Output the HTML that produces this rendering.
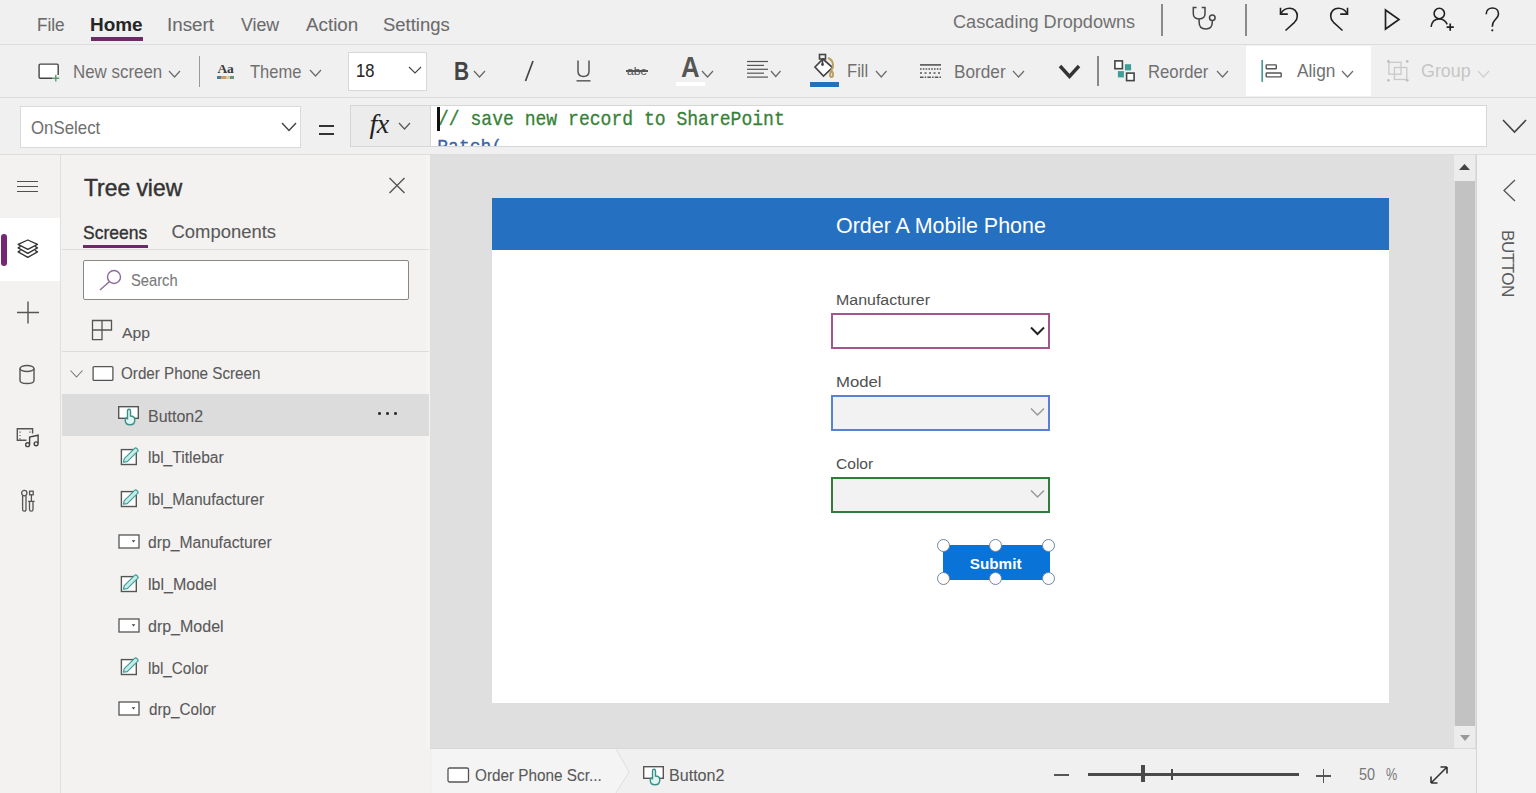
<!DOCTYPE html>
<html><head><meta charset="utf-8"><style>
html,body{margin:0;padding:0;width:1536px;height:793px;overflow:hidden;background:#f0f0f0;}
body>div,body>svg{position:absolute;}
div div{position:absolute;}
</style></head><body>
<div style="left:0px;top:0px;width:1536px;height:793px;background:#f0f0f0;"></div><div style="left:0px;top:44px;width:1536px;height:1px;background:#dcdcdc;"></div><div style="left:0px;top:97px;width:1536px;height:1px;background:#dcdcdc;"></div><div style="left:0px;top:154px;width:1536px;height:1px;background:#dcdcdc;"></div><div style="left:0px;top:155px;width:60px;height:638px;background:#f3f2f1;"></div><div style="left:60px;top:155px;width:1px;height:638px;background:#e1dfdd;"></div><div style="left:0px;top:218px;width:60px;height:63px;background:#ffffff;"></div><div style="left:1px;top:234px;width:6px;height:32px;background:#742774;border-radius:3px;"></div><div style="left:61px;top:155px;width:369px;height:638px;background:#f3f2f1;"></div><div style="left:426px;top:155px;width:4px;height:593px;background:#f5f4f3;"></div><div style="left:430px;top:155px;width:1046px;height:593px;background:#dfdfdf;"></div><div style="left:492px;top:198px;width:897px;height:505px;background:#ffffff;"></div><div style="left:492px;top:198px;width:897px;height:52px;background:#2670c2;"></div><div style="left:1454px;top:155px;width:22px;height:593px;background:#dedede;"></div><div style="left:1454px;top:155px;width:21px;height:26px;background:#ececec;"></div><div style="left:1455px;top:181px;width:20px;height:545px;background:#c2c2c2;"></div><div style="left:1454px;top:726px;width:21px;height:22px;background:#ececec;"></div><div style="left:1476px;top:155px;width:1px;height:638px;background:#d4d4d4;"></div><div style="left:1477px;top:155px;width:59px;height:638px;background:#f3f3f3;"></div><div style="left:430px;top:748px;width:1046px;height:45px;background:#f0f0f0;"></div><div style="left:430px;top:748px;width:1046px;height:1px;background:#d8d8d8;"></div><div style="left:432px;top:749px;width:186px;height:44px;background:#f4f4f4;"></div><svg style="left:612px;top:749px;" width="20" height="44" viewBox="0 0 20 44" ><polyline points="4,0 17,23 4,44" fill="#f4f4f4" stroke="#dedede" stroke-width="1"/></svg><div style="left:37.20px;top:15.13px;font-family:'Liberation Sans',sans-serif;font-weight:normal;font-size:19.19px;line-height:1;color:#6b6b6b;white-space:pre;-webkit-text-stroke:0.1px #6b6b6b;transform:scaleX(0.8952);transform-origin:0 0;">File</div><div style="left:89.90px;top:15.13px;font-family:'Liberation Sans',sans-serif;font-weight:bold;font-size:19.19px;line-height:1;color:#252525;white-space:pre;transform:scaleX(0.9875);transform-origin:0 0;">Home</div><div style="left:90.5px;top:37px;width:52.5px;height:3.8px;background:#6a2c68;"></div><div style="left:167.00px;top:15.13px;font-family:'Liberation Sans',sans-serif;font-weight:normal;font-size:19.19px;line-height:1;color:#6b6b6b;white-space:pre;-webkit-text-stroke:0.1px #6b6b6b;transform:scaleX(0.9784);transform-origin:0 0;">Insert</div><div style="left:240.80px;top:15.13px;font-family:'Liberation Sans',sans-serif;font-weight:normal;font-size:19.19px;line-height:1;color:#6b6b6b;white-space:pre;-webkit-text-stroke:0.1px #6b6b6b;transform:scaleX(0.9254);transform-origin:0 0;">View</div><div style="left:305.80px;top:15.13px;font-family:'Liberation Sans',sans-serif;font-weight:normal;font-size:19.19px;line-height:1;color:#6b6b6b;white-space:pre;-webkit-text-stroke:0.1px #6b6b6b;transform:scaleX(0.9796);transform-origin:0 0;">Action</div><div style="left:383.00px;top:14.73px;font-family:'Liberation Sans',sans-serif;font-weight:normal;font-size:19.19px;line-height:1;color:#6b6b6b;white-space:pre;-webkit-text-stroke:0.1px #6b6b6b;transform:scaleX(0.9612);transform-origin:0 0;">Settings</div><div style="left:952.70px;top:12.56px;font-family:'Liberation Sans',sans-serif;font-weight:normal;font-size:18.90px;line-height:1;color:#707070;white-space:pre;transform:scaleX(0.9585);transform-origin:0 0;-webkit-text-stroke:0px;">Cascading Dropdowns</div><div style="left:1161px;top:4px;width:1.5px;height:32px;background:#8a8a8a;"></div><div style="left:1245px;top:4px;width:1.5px;height:32px;background:#8a8a8a;"></div><div style="left:72.70px;top:62.65px;font-family:'Liberation Sans',sans-serif;font-weight:normal;font-size:18.31px;line-height:1;color:#707070;white-space:pre;transform:scaleX(0.9241);transform-origin:0 0;-webkit-text-stroke:0px;">New screen</div><svg style="left:167.0px;top:68.5px;" width="15" height="10" viewBox="0 0 15 10" ><polyline points="2,2 7.5,8 13,2" fill="none" stroke="#6b6b6b" stroke-width="1.2"/></svg><div style="left:198.5px;top:56px;width:1.5px;height:31px;background:#999;"></div><div style="left:250.00px;top:62.65px;font-family:'Liberation Sans',sans-serif;font-weight:normal;font-size:18.31px;line-height:1;color:#707070;white-space:pre;transform:scaleX(0.9037);transform-origin:0 0;-webkit-text-stroke:0px;">Theme</div><svg style="left:307.8px;top:68.4px;" width="15" height="10" viewBox="0 0 15 10" ><polyline points="2,2 7.5,8 13,2" fill="none" stroke="#6b6b6b" stroke-width="1.2"/></svg><div style="left:348px;top:51.5px;width:79px;height:39px;background:#ffffff;box-sizing:border-box;border:1.5px solid #d8d8d8;"></div><div style="left:356.40px;top:62.50px;font-family:'Liberation Sans',sans-serif;font-weight:normal;font-size:17.59px;line-height:1;color:#262626;white-space:pre;-webkit-text-stroke:0.1px #262626;transform:scaleX(0.9393);transform-origin:0 0;">18</div><svg style="left:406.8px;top:65.2px;" width="16" height="10" viewBox="0 0 16 10" ><polyline points="2,2 8.0,8 14,2" fill="none" stroke="#444" stroke-width="1.1"/></svg><div style="left:846.90px;top:62.29px;font-family:'Liberation Sans',sans-serif;font-weight:normal;font-size:18.31px;line-height:1;color:#707070;white-space:pre;transform:scaleX(0.9080);transform-origin:0 0;-webkit-text-stroke:0px;">Fill</div><svg style="left:873.55px;top:68.5px;" width="14.5" height="10" viewBox="0 0 14.5 10" ><polyline points="2,2 7.25,8 12.5,2" fill="none" stroke="#6b6b6b" stroke-width="1.2"/></svg><div style="left:954.00px;top:62.65px;font-family:'Liberation Sans',sans-serif;font-weight:normal;font-size:18.31px;line-height:1;color:#707070;white-space:pre;transform:scaleX(0.9406);transform-origin:0 0;-webkit-text-stroke:0px;">Border</div><svg style="left:1011.0px;top:68.5px;" width="15" height="10" viewBox="0 0 15 10" ><polyline points="2,2 7.5,8 13,2" fill="none" stroke="#6b6b6b" stroke-width="1.2"/></svg><div style="left:1097px;top:55.5px;width:1.5px;height:30.5px;background:#888;"></div><div style="left:1148.30px;top:62.65px;font-family:'Liberation Sans',sans-serif;font-weight:normal;font-size:18.31px;line-height:1;color:#707070;white-space:pre;transform:scaleX(0.9130);transform-origin:0 0;-webkit-text-stroke:0px;">Reorder</div><svg style="left:1214.8px;top:68.5px;" width="15" height="10" viewBox="0 0 15 10" ><polyline points="2,2 7.5,8 13,2" fill="none" stroke="#6b6b6b" stroke-width="1.2"/></svg><div style="left:1246.4px;top:46px;width:124.4px;height:50px;background:#ffffff;"></div><div style="left:1296.80px;top:61.91px;font-family:'Liberation Sans',sans-serif;font-weight:normal;font-size:18.31px;line-height:1;color:#707070;white-space:pre;transform:scaleX(0.9431);transform-origin:0 0;-webkit-text-stroke:0px;">Align</div><svg style="left:1340.0px;top:68.5px;" width="15" height="10" viewBox="0 0 15 10" ><polyline points="2,2 7.5,8 13,2" fill="none" stroke="#6b6b6b" stroke-width="1.2"/></svg><div style="left:1420.80px;top:61.91px;font-family:'Liberation Sans',sans-serif;font-weight:normal;font-size:18.31px;line-height:1;color:#c6c6c6;white-space:pre;transform:scaleX(0.9753);transform-origin:0 0;-webkit-text-stroke:0px;">Group</div><svg style="left:1475.5px;top:68.5px;" width="15" height="10" viewBox="0 0 15 10" ><polyline points="2,2 7.5,8 13,2" fill="none" stroke="#cfcfcf" stroke-width="1.2"/></svg><div style="left:20px;top:106px;width:281px;height:42px;background:#ffffff;box-sizing:border-box;border:1px solid #dadada;"></div><div style="left:31.30px;top:119.51px;font-family:'Liberation Sans',sans-serif;font-weight:normal;font-size:17.88px;line-height:1;color:#6e6e6e;white-space:pre;transform:scaleX(0.9427);transform-origin:0 0;-webkit-text-stroke:0px;">OnSelect</div><svg style="left:280.0px;top:121.25px;" width="18" height="11.5" viewBox="0 0 18 11.5" ><polyline points="2,2 9.0,9.5 16,2" fill="none" stroke="#444" stroke-width="1.4"/></svg><div style="left:319px;top:125px;width:15px;height:2.2px;background:#333;"></div><div style="left:319px;top:132.5px;width:15px;height:2.2px;background:#333;"></div><div style="left:350.3px;top:105px;width:79.4px;height:41.5px;background:#ececec;box-sizing:border-box;border:1px solid #d6d6d6;border-right:none;"></div><div style="left:429.7px;top:105px;width:1057.5px;height:41.5px;background:#ffffff;box-sizing:border-box;border:1px solid #d6d6d6;overflow:hidden;"></div><div style="left:438.00px;top:110.08px;font-family:'Liberation Mono',sans-serif;font-weight:normal;font-size:20.03px;line-height:1;color:#368236;white-space:pre;transform:scaleX(0.9022);transform-origin:0 0;-webkit-text-stroke:0.3px #368236;">// save new record to SharePoint</div><div style="left:431px;top:131px;width:1054px;height:15px;overflow:hidden;"><div style="left:6.3px;top:6.7px;font-family:'Liberation Mono',monospace;font-size:18px;line-height:1;color:#3b63a8;-webkit-text-stroke:0.3px #3b63a8;white-space:pre;transform:scaleX(1.0);">Patch(</div></div><div style="left:437px;top:106.7px;width:3px;height:24.6px;background:#111;"></div><svg style="left:1500.7px;top:118.2px;" width="27" height="16" viewBox="0 0 27 16" ><polyline points="2,2 13.5,14 25,2" fill="none" stroke="#444" stroke-width="1.6"/></svg><div style="left:17px;top:180.6px;width:21.3px;height:1.5px;background:#505050;"></div><div style="left:17px;top:185.6px;width:21.3px;height:1.5px;background:#505050;"></div><div style="left:17px;top:190.6px;width:21.3px;height:1.5px;background:#505050;"></div><div style="left:83.80px;top:176.87px;font-family:'Liberation Sans',sans-serif;font-weight:normal;font-size:23.26px;line-height:1;color:#333333;white-space:pre;transform:scaleX(0.9820);transform-origin:0 0;-webkit-text-stroke:0.45px #333;">Tree view</div><svg style="left:388px;top:177.3px;" width="18" height="17" viewBox="0 0 18 17" ><path d="M1.5,1 L16.5,16 M16.5,1 L1.5,16" stroke="#555" stroke-width="1.4" fill="none"/></svg><div style="left:82.80px;top:223.83px;font-family:'Liberation Sans',sans-serif;font-weight:normal;font-size:18.46px;line-height:1;color:#333333;white-space:pre;transform:scaleX(0.9485);transform-origin:0 0;-webkit-text-stroke:0.35px #333;">Screens</div><div style="left:83px;top:244.7px;width:65px;height:3px;background:#6a2c68;"></div><div style="left:171.50px;top:223.14px;font-family:'Liberation Sans',sans-serif;font-weight:normal;font-size:18.46px;line-height:1;color:#595959;white-space:pre;-webkit-text-stroke:0.1px #595959;">Components</div><div style="left:62px;top:248.7px;width:367px;height:1px;background:#dcdcdc;"></div><div style="left:83px;top:260px;width:326px;height:40px;background:#ffffff;box-sizing:border-box;border:1px solid #8a8886;border-radius:2px;"></div><svg style="left:98px;top:268px;" width="26" height="23" viewBox="0 0 26 23" ><circle cx="16" cy="9" r="6.5" fill="none" stroke="#8d6a9a" stroke-width="1.4"/><line x1="11.3" y1="13.8" x2="2" y2="22" stroke="#8d6a9a" stroke-width="1.4"/></svg><div style="left:131.20px;top:272.78px;font-family:'Liberation Sans',sans-serif;font-weight:normal;font-size:15.99px;line-height:1;color:#7a7a7a;white-space:pre;-webkit-text-stroke:0.1px #7a7a7a;transform:scaleX(0.9208);transform-origin:0 0;">Search</div><svg style="left:91px;top:319px;" width="22" height="22" viewBox="0 0 22 22" ><path d="M1.5,1.5 H20.5 V11 H11 V20.6 H1.5 Z M1.5,11 H11 V1.5" fill="none" stroke="#555" stroke-width="1.3"/></svg><div style="left:121.90px;top:324.86px;font-family:'Liberation Sans',sans-serif;font-weight:normal;font-size:15.41px;line-height:1;color:#595959;white-space:pre;-webkit-text-stroke:0.1px #595959;transform:scaleX(1.0216);transform-origin:0 0;">App</div><div style="left:62px;top:351px;width:367px;height:1px;background:#dcdcdc;"></div><svg style="left:69px;top:368.5px;" width="15" height="10" viewBox="0 0 15 10" ><polyline points="1.5,1.5 7.5,8 13.5,1.5" fill="none" stroke="#777" stroke-width="1.1"/></svg><svg style="left:92px;top:365px;" width="22" height="17" viewBox="0 0 22 17" ><rect x="1.1" y="1.6" width="19.8" height="13.8" rx="1" fill="#fff" stroke="#555" stroke-width="1.3"/></svg><div style="left:121.20px;top:366.40px;font-family:'Liberation Sans',sans-serif;font-weight:normal;font-size:15.84px;line-height:1;color:#595959;white-space:pre;-webkit-text-stroke:0.1px #595959;transform:scaleX(0.9609);transform-origin:0 0;">Order Phone Screen</div><div style="left:62px;top:394px;width:367px;height:42px;background:#dcdcdc;"></div><svg style="left:117px;top:406px;" width="23" height="20" viewBox="0 0 23 20" ><rect x="1.7" y="0.7" width="19.6" height="11.6" fill="#fff" stroke="#555" stroke-width="1.4"/><path d="M10.5,13.5 V5 Q10.5,3.3 12,3.3 Q13.5,3.3 13.5,5 V10 Q17.8,10 17.8,14 Q17.8,18.8 13,18.8 Q8.2,18.8 8.2,14 Q8.2,12.2 10.5,11.5" fill="#dff5f2" stroke="#3a8f88" stroke-width="1.4"/></svg><div style="left:148.00px;top:408.50px;font-family:'Liberation Sans',sans-serif;font-weight:normal;font-size:15.84px;line-height:1;color:#595959;white-space:pre;-webkit-text-stroke:0.1px #595959;transform:scaleX(1.0082);transform-origin:0 0;">Button2</div><div style="left:378.3px;top:412px;width:2.5px;height:2.5px;background:#333;border-radius:50%;"></div><div style="left:386.3px;top:412px;width:2.5px;height:2.5px;background:#333;border-radius:50%;"></div><div style="left:394.3px;top:412px;width:2.5px;height:2.5px;background:#333;border-radius:50%;"></div><svg style="left:119.5px;top:447px;" width="20" height="20" viewBox="0 0 20 20" ><rect x="1.4" y="2.6" width="14.9" height="14.9" fill="#fff" stroke="#555" stroke-width="1.4"/><path d="M3.4,15.2 L4.3,11.6 L14.6,1.4 Q15.6,0.4 16.8,1.5 L17.6,2.3 Q18.6,3.4 17.6,4.4 L7.3,14.6 Z" fill="#c6ece8" stroke="#3f9e96" stroke-width="1.2" stroke-linejoin="round"/></svg><div style="left:148.20px;top:449.89px;font-family:'Liberation Sans',sans-serif;font-weight:normal;font-size:15.84px;line-height:1;color:#595959;white-space:pre;-webkit-text-stroke:0.1px #595959;transform:scaleX(0.9859);transform-origin:0 0;">lbl_Titlebar</div><svg style="left:119.5px;top:489px;" width="20" height="20" viewBox="0 0 20 20" ><rect x="1.4" y="2.6" width="14.9" height="14.9" fill="#fff" stroke="#555" stroke-width="1.4"/><path d="M3.4,15.2 L4.3,11.6 L14.6,1.4 Q15.6,0.4 16.8,1.5 L17.6,2.3 Q18.6,3.4 17.6,4.4 L7.3,14.6 Z" fill="#c6ece8" stroke="#3f9e96" stroke-width="1.2" stroke-linejoin="round"/></svg><div style="left:148.40px;top:491.89px;font-family:'Liberation Sans',sans-serif;font-weight:normal;font-size:15.84px;line-height:1;color:#595959;white-space:pre;-webkit-text-stroke:0.1px #595959;transform:scaleX(0.9849);transform-origin:0 0;">lbl_Manufacturer</div><svg style="left:117.5px;top:533.8px;" width="22" height="15" viewBox="0 0 22 15" ><rect x="1" y="1" width="20" height="13" fill="#fff" stroke="#555" stroke-width="1.3"/><polygon points="13.6,6.3 17.4,6.3 15.5,8.6" fill="#444"/></svg><div style="left:148.20px;top:534.67px;font-family:'Liberation Sans',sans-serif;font-weight:normal;font-size:15.84px;line-height:1;color:#595959;white-space:pre;-webkit-text-stroke:0.1px #595959;transform:scaleX(0.9909);transform-origin:0 0;">drp_Manufacturer</div><svg style="left:119.5px;top:573.7px;" width="20" height="20" viewBox="0 0 20 20" ><rect x="1.4" y="2.6" width="14.9" height="14.9" fill="#fff" stroke="#555" stroke-width="1.4"/><path d="M3.4,15.2 L4.3,11.6 L14.6,1.4 Q15.6,0.4 16.8,1.5 L17.6,2.3 Q18.6,3.4 17.6,4.4 L7.3,14.6 Z" fill="#c6ece8" stroke="#3f9e96" stroke-width="1.2" stroke-linejoin="round"/></svg><div style="left:148.20px;top:576.99px;font-family:'Liberation Sans',sans-serif;font-weight:normal;font-size:15.84px;line-height:1;color:#595959;white-space:pre;-webkit-text-stroke:0.1px #595959;transform:scaleX(1.0109);transform-origin:0 0;">lbl_Model</div><svg style="left:117.5px;top:617.5px;" width="22" height="15" viewBox="0 0 22 15" ><rect x="1" y="1" width="20" height="13" fill="#fff" stroke="#555" stroke-width="1.3"/><polygon points="13.6,6.3 17.4,6.3 15.5,8.6" fill="#444"/></svg><div style="left:148.20px;top:618.67px;font-family:'Liberation Sans',sans-serif;font-weight:normal;font-size:15.84px;line-height:1;color:#595959;white-space:pre;-webkit-text-stroke:0.1px #595959;transform:scaleX(1.0106);transform-origin:0 0;">drp_Model</div><svg style="left:119.5px;top:657.3px;" width="20" height="20" viewBox="0 0 20 20" ><rect x="1.4" y="2.6" width="14.9" height="14.9" fill="#fff" stroke="#555" stroke-width="1.4"/><path d="M3.4,15.2 L4.3,11.6 L14.6,1.4 Q15.6,0.4 16.8,1.5 L17.6,2.3 Q18.6,3.4 17.6,4.4 L7.3,14.6 Z" fill="#c6ece8" stroke="#3f9e96" stroke-width="1.2" stroke-linejoin="round"/></svg><div style="left:148.20px;top:660.79px;font-family:'Liberation Sans',sans-serif;font-weight:normal;font-size:15.84px;line-height:1;color:#595959;white-space:pre;-webkit-text-stroke:0.1px #595959;transform:scaleX(0.9663);transform-origin:0 0;">lbl_Color</div><svg style="left:117.5px;top:700.9px;" width="22" height="15" viewBox="0 0 22 15" ><rect x="1" y="1" width="20" height="13" fill="#fff" stroke="#555" stroke-width="1.3"/><polygon points="13.6,6.3 17.4,6.3 15.5,8.6" fill="#444"/></svg><div style="left:149.20px;top:701.87px;font-family:'Liberation Sans',sans-serif;font-weight:normal;font-size:15.84px;line-height:1;color:#595959;white-space:pre;-webkit-text-stroke:0.1px #595959;transform:scaleX(0.9631);transform-origin:0 0;">drp_Color</div><div style="left:836.00px;top:214.63px;font-family:'Liberation Sans',sans-serif;font-weight:normal;font-size:22.09px;line-height:1;color:#ffffff;white-space:pre;transform:scaleX(0.9716);transform-origin:0 0;-webkit-text-stroke:0px;">Order A Mobile Phone</div><div style="left:836.00px;top:292.28px;font-family:'Liberation Sans',sans-serif;font-weight:normal;font-size:15.26px;line-height:1;color:#505050;white-space:pre;transform:scaleX(1.0455);transform-origin:0 0;-webkit-text-stroke:0px;">Manufacturer</div><div style="left:831px;top:313.4px;width:219px;height:36px;background:#ffffff;box-sizing:border-box;border:2.5px solid #a4558e;"></div><svg style="left:1029px;top:325px;" width="17" height="12" viewBox="0 0 17 12" ><polyline points="2,2.5 8.5,9 15,2.5" fill="none" stroke="#222" stroke-width="2"/></svg><div style="left:836.00px;top:373.98px;font-family:'Liberation Sans',sans-serif;font-weight:normal;font-size:15.26px;line-height:1;color:#505050;white-space:pre;transform:scaleX(1.0963);transform-origin:0 0;-webkit-text-stroke:0px;">Model</div><div style="left:831px;top:395.3px;width:219px;height:36px;background:#f2f2f2;box-sizing:border-box;border:2.5px solid #5a7fd6;"></div><svg style="left:1029px;top:406px;" width="17" height="12" viewBox="0 0 17 12" ><polyline points="2,2.5 8.5,9 15,2.5" fill="none" stroke="#999" stroke-width="1.5"/></svg><div style="left:836.00px;top:456.38px;font-family:'Liberation Sans',sans-serif;font-weight:normal;font-size:15.26px;line-height:1;color:#505050;white-space:pre;transform:scaleX(1.0210);transform-origin:0 0;-webkit-text-stroke:0px;">Color</div><div style="left:831px;top:477.4px;width:219px;height:36px;background:#f2f2f2;box-sizing:border-box;border:2.5px solid #2e7d3a;"></div><svg style="left:1029px;top:488px;" width="17" height="12" viewBox="0 0 17 12" ><polyline points="2,2.5 8.5,9 15,2.5" fill="none" stroke="#999" stroke-width="1.5"/></svg><div style="left:942.5px;top:545.4px;width:107px;height:34.4px;background:#0a73d7;"></div><div style="left:969.80px;top:555.63px;font-family:'Liberation Sans',sans-serif;font-weight:bold;font-size:15.26px;line-height:1;color:#ffffff;white-space:pre;">Submit</div><div style="left:936.7px;top:539.3px;width:13px;height:13px;box-sizing:border-box;border:1.7px solid #6d86a3;border-radius:50%;background:#fff;"></div><div style="left:936.7px;top:571.9px;width:13px;height:13px;box-sizing:border-box;border:1.7px solid #6d86a3;border-radius:50%;background:#fff;"></div><div style="left:989.3px;top:539.3px;width:13px;height:13px;box-sizing:border-box;border:1.7px solid #6d86a3;border-radius:50%;background:#fff;"></div><div style="left:989.3px;top:571.9px;width:13px;height:13px;box-sizing:border-box;border:1.7px solid #6d86a3;border-radius:50%;background:#fff;"></div><div style="left:1042.1px;top:539.3px;width:13px;height:13px;box-sizing:border-box;border:1.7px solid #6d86a3;border-radius:50%;background:#fff;"></div><div style="left:1042.1px;top:571.9px;width:13px;height:13px;box-sizing:border-box;border:1.7px solid #6d86a3;border-radius:50%;background:#fff;"></div><svg style="left:1459px;top:164px;" width="11" height="7" viewBox="0 0 11 7" ><polygon points="0,6 5.5,0 11,6" fill="#444"/></svg><svg style="left:1459.5px;top:734.5px;" width="10" height="6" viewBox="0 0 10 6" ><polygon points="0,0 10,0 5,6" fill="#999"/></svg><svg style="left:1502px;top:179px;" width="15" height="23" viewBox="0 0 15 23" ><polyline points="13,1 2,11.5 13,22" fill="none" stroke="#555" stroke-width="1.3"/></svg><div style="left:1516.3px;top:229.5px;transform:rotate(90deg);transform-origin:0 0;font-family:'Liberation Sans',sans-serif;font-size:17px;line-height:1;color:#5a5a5a;white-space:pre;letter-spacing:-0.45px;">BUTTON</div><svg style="left:447px;top:767px;" width="23" height="16" viewBox="0 0 23 16" ><rect x="1" y="1" width="20.5" height="14" rx="1.5" fill="#fff" stroke="#555" stroke-width="1.3"/></svg><div style="left:475.20px;top:768.06px;font-family:'Liberation Sans',sans-serif;font-weight:normal;font-size:16.86px;line-height:1;color:#595959;white-space:pre;-webkit-text-stroke:0.1px #595959;transform:scaleX(0.9069);transform-origin:0 0;">Order Phone Scr...</div><svg style="left:641.5px;top:765.5px;" width="23" height="20" viewBox="0 0 23 20" ><rect x="1.7" y="0.7" width="19.6" height="11.6" fill="#fff" stroke="#555" stroke-width="1.4"/><path d="M10.5,13.5 V5 Q10.5,3.3 12,3.3 Q13.5,3.3 13.5,5 V10 Q17.8,10 17.8,14 Q17.8,18.8 13,18.8 Q8.2,18.8 8.2,14 Q8.2,12.2 10.5,11.5" fill="#dff5f2" stroke="#3a8f88" stroke-width="1.4"/></svg><div style="left:668.80px;top:768.06px;font-family:'Liberation Sans',sans-serif;font-weight:normal;font-size:16.86px;line-height:1;color:#595959;white-space:pre;-webkit-text-stroke:0.1px #595959;transform:scaleX(0.9542);transform-origin:0 0;">Button2</div><div style="left:1053.6px;top:774px;width:15px;height:1.5px;background:#555;"></div><div style="left:1088px;top:773.4px;width:210.5px;height:2.7px;background:#4a4a4a;"></div><div style="left:1141px;top:765px;width:4px;height:17px;background:#4a4a4a;"></div><div style="left:1171.2px;top:769px;width:1.8px;height:11px;background:#4a4a4a;"></div><div style="left:1316px;top:775px;width:15px;height:1.5px;background:#555;"></div><div style="left:1322.7px;top:769px;width:1.5px;height:13.5px;background:#555;"></div><div style="left:1359.00px;top:767.02px;font-family:'Liberation Sans',sans-serif;font-weight:normal;font-size:15.70px;line-height:1;color:#777;white-space:pre;transform:scaleX(0.9207);transform-origin:0 0;-webkit-text-stroke:0px;">50</div><div style="left:1386.00px;top:766.89px;font-family:'Liberation Sans',sans-serif;font-weight:normal;font-size:15.70px;line-height:1;color:#777;white-space:pre;transform:scaleX(0.8043);transform-origin:0 0;-webkit-text-stroke:0px;">%</div><svg style="left:1429px;top:764.5px;" width="20" height="20" viewBox="0 0 20 20" ><path d="M2,18 L18,2 M2,18 V11.5 M2,18 H8.5 M18,2 H11.5 M18,2 V8.5" fill="none" stroke="#333" stroke-width="1.6"/></svg><svg style="left:37px;top:62px;" width="25" height="21" viewBox="0 0 25 21" ><path d="M15.5,16.3 H3.3 Q2.1,16.3 2.1,15.1 V3.3 Q2.1,2.1 3.3,2.1 H20 Q21.2,2.1 21.2,3.3 V13" fill="#fff" stroke="#444" stroke-width="1.4"/><path d="M18.8,12.8 V19.6 M15.4,16.2 H22.2" stroke="#5a9a68" stroke-width="1.4"/></svg><div style="left:217.5px;top:62.2px;font-family:'Liberation Serif',serif;font-weight:bold;font-size:13.5px;line-height:1;color:#3a3a3a;letter-spacing:-0.3px;">Aa</div><div style="left:217px;top:75.5px;width:4.3px;height:3.4px;background:#4f7d93;"></div><div style="left:221.3px;top:75.5px;width:4.3px;height:3.4px;background:#d29a6a;"></div><div style="left:225.6px;top:75.5px;width:4.3px;height:3.4px;background:#d8cf98;"></div><div style="left:229.9px;top:75.5px;width:4.3px;height:3.4px;background:#6e9080;"></div><div style="left:454.00px;top:59.21px;font-family:'Liberation Sans',sans-serif;font-weight:bold;font-size:25.73px;line-height:1;color:#444;white-space:pre;transform:scaleX(0.8119);transform-origin:0 0;">B</div><svg style="left:472.1px;top:68.8px;" width="15" height="10" viewBox="0 0 15 10" ><polyline points="2,2 7.5,8 13,2" fill="none" stroke="#666" stroke-width="1.2"/></svg><svg style="left:523px;top:59px;" width="12" height="24" viewBox="0 0 12 24" ><line x1="10" y1="2" x2="2.5" y2="22" stroke="#444" stroke-width="1.7"/></svg><svg style="left:575px;top:59px;" width="17" height="24" viewBox="0 0 17 24" ><path d="M3,1.5 V12 Q3,17.5 8.5,17.5 Q14,17.5 14,12 V1.5" fill="none" stroke="#555" stroke-width="1.5"/><line x1="1.5" y1="21.8" x2="15.5" y2="21.8" stroke="#666" stroke-width="1.6"/></svg><div style="left:627.00px;top:65.62px;font-family:'Liberation Sans',sans-serif;font-weight:normal;font-size:11.34px;line-height:1;color:#555;white-space:pre;-webkit-text-stroke:0.1px #555;transform:scaleX(1.0677);transform-origin:0 0;">abc</div><div style="left:626px;top:70.3px;width:21.5px;height:1.3px;background:#555;"></div><div style="left:681.00px;top:51.76px;font-family:'Liberation Sans',sans-serif;font-weight:bold;font-size:29.80px;line-height:1;color:#555;white-space:pre;transform:scaleX(0.8643);transform-origin:0 0;">A</div><div style="left:676px;top:82px;width:29px;height:4px;background:#ffffff;"></div><svg style="left:700.0px;top:68.8px;" width="15" height="10" viewBox="0 0 15 10" ><polyline points="2,2 7.5,8 13,2" fill="none" stroke="#666" stroke-width="1.2"/></svg><svg style="left:746px;top:60px;" width="24" height="20" viewBox="0 0 24 20" ><line x1="1" y1="1.5" x2="22" y2="1.5" stroke="#555" stroke-width="1.2"/><line x1="1" y1="5.4" x2="18" y2="5.4" stroke="#555" stroke-width="1.2"/><line x1="1" y1="9.3" x2="22" y2="9.3" stroke="#555" stroke-width="1.2"/><line x1="1" y1="13.2" x2="18" y2="13.2" stroke="#555" stroke-width="1.2"/><line x1="1" y1="17.1" x2="22" y2="17.1" stroke="#555" stroke-width="1.2"/></svg><svg style="left:769.25px;top:69.25px;" width="13.5" height="9.5" viewBox="0 0 13.5 9.5" ><polyline points="2,2 6.75,7.5 11.5,2" fill="none" stroke="#666" stroke-width="1.2"/></svg><svg style="left:811px;top:53px;" width="28" height="27" viewBox="0 0 28 27" ><path d="M4,14 L12,6 L21.5,14.5 L12.5,23 Z" fill="#fff" stroke="#444" stroke-width="1.7"/><rect x="8.5" y="1.5" width="6" height="4.5" fill="none" stroke="#444" stroke-width="1.6"/><path d="M11.5,6 V11" stroke="#444" stroke-width="1.6"/><circle cx="11.5" cy="11.5" r="1.4" fill="#444"/><path d="M17,5 Q22,7 22,12 Q22,15 20.5,17 Q19,20 19,22 Q19,24 20.5,24 Q22,24 22,22 Q22,20 21,18" fill="none" stroke="#b8a060" stroke-width="2"/></svg><div style="left:810px;top:81.6px;width:29px;height:5px;background:#1e72c0;"></div><svg style="left:919px;top:62px;" width="24" height="18" viewBox="0 0 24 18" ><line x1="1" y1="2.9" x2="22" y2="2.9" stroke="#555" stroke-width="1.6"/><line x1="1" y1="6.9" x2="22" y2="6.9" stroke="#555" stroke-width="1.5" stroke-dasharray="1.6 1.2"/><line x1="1" y1="10.9" x2="22" y2="10.9" stroke="#555" stroke-width="1.5" stroke-dasharray="2 2.5"/><line x1="1" y1="15.2" x2="22" y2="15.2" stroke="#555" stroke-width="1.6" stroke-dasharray="3.5 1.2 1.5 1.2"/></svg><svg style="left:1057px;top:63px;" width="26" height="18" viewBox="0 0 26 18" ><polyline points="3,3 12.5,13.5 22,3" fill="none" stroke="#333" stroke-width="3.4"/></svg><svg style="left:1112px;top:59px;" width="25" height="24" viewBox="0 0 25 24" ><rect x="12.9" y="5.2" width="6.2" height="6.2" fill="#3f9f97"/><rect x="5.9" y="12.1" width="6" height="6.3" fill="#3f9f97"/><rect x="2.9" y="1.9" width="7.5" height="7.8" fill="#fff" stroke="#444" stroke-width="1.6"/><rect x="14.6" y="14.1" width="7.5" height="7.5" fill="#fff" stroke="#444" stroke-width="1.6"/></svg><svg style="left:1260px;top:58px;" width="24" height="25" viewBox="0 0 24 25" ><line x1="2.2" y1="2.6" x2="2.2" y2="23.2" stroke="#4c9a92" stroke-width="1.7" stroke-linecap="round"/><rect x="6.2" y="6.9" width="10.1" height="3.9" rx="0.6" fill="#fff" stroke="#555" stroke-width="1.4"/><rect x="6.2" y="15" width="15" height="3.9" rx="0.6" fill="#fff" stroke="#555" stroke-width="1.4"/></svg><svg style="left:1385px;top:58px;" width="26" height="25" viewBox="0 0 26 25" ><rect x="3.9" y="4.3" width="12.1" height="11.9" fill="none" stroke="#c9c9c9" stroke-width="1.3"/><rect x="9.4" y="9.5" width="12.4" height="12" fill="none" stroke="#c9c9c9" stroke-width="1.3"/><circle cx="3.4" cy="3.4" r="1.4" fill="#c0c0c0"/><circle cx="22.2" cy="3.4" r="1.4" fill="#c0c0c0"/><circle cx="3.4" cy="22.3" r="1.4" fill="#c0c0c0"/><circle cx="22.2" cy="22.3" r="1.4" fill="#c0c0c0"/></svg><svg style="left:1191px;top:6px;" width="27" height="26" viewBox="0 0 27 26" ><path d="M5.6,1.6 H2.3 V7.5 Q2.3,12.9 8.1,12.9 Q14,12.9 14,7.5 V1.6 H10.7" fill="none" stroke="#444" stroke-width="1.5"/><path d="M8.1,12.9 V16 Q8.1,23 14.8,23 Q21.3,23 21.3,16 V14.6" fill="none" stroke="#444" stroke-width="1.5"/><circle cx="21.3" cy="11.7" r="2.8" fill="none" stroke="#444" stroke-width="1.5"/></svg><svg style="left:1277px;top:5px;" width="24" height="28" viewBox="0 0 24 28" ><path d="M3.5,9.1 C6,4.5 9.5,3.2 12.6,3.2 C17,3.2 20.3,6.5 20.3,11 C20.3,13.5 19.3,15.5 17.5,17.3 L8.5,25.5" fill="none" stroke="#222" stroke-width="1.6"/><polyline points="3.5,2.7 3.5,9.1 10.8,9.1" fill="none" stroke="#222" stroke-width="1.6"/></svg><svg style="left:1327.3px;top:5px;" width="24" height="28" viewBox="0 0 24 28" ><g transform="translate(24,0) scale(-1,1)"><path d="M3.5,9.1 C6,4.5 9.5,3.2 12.6,3.2 C17,3.2 20.3,6.5 20.3,11 C20.3,13.5 19.3,15.5 17.5,17.3 L8.5,25.5" fill="none" stroke="#222" stroke-width="1.6"/><polyline points="3.5,2.7 3.5,9.1 10.8,9.1" fill="none" stroke="#222" stroke-width="1.6"/></g></svg><svg style="left:1383px;top:8px;" width="18" height="23" viewBox="0 0 18 23" ><polygon points="2.5,2 16,11.5 2.5,21" fill="none" stroke="#222" stroke-width="1.7"/></svg><svg style="left:1429px;top:6px;" width="28" height="27" viewBox="0 0 28 27" ><circle cx="10.3" cy="7.5" r="5.2" fill="none" stroke="#222" stroke-width="1.6"/><path d="M2.1,20.8 Q3.2,13 10.3,13 Q15.8,13 18.2,18.4" fill="none" stroke="#222" stroke-width="1.6"/><path d="M21.2,17.6 V24.8 M17.6,21.2 H24.8" stroke="#222" stroke-width="1.7"/></svg><svg style="left:1483px;top:6px;" width="19" height="27" viewBox="0 0 19 27" ><path d="M3.2,8.3 C3.2,4.2 6,2 9.5,2 C13,2 15.5,4.5 15.5,8 C15.5,11 13.5,12.5 11.5,14.5 C10,16 9.3,18 9.3,20.8" fill="none" stroke="#222" stroke-width="1.6"/><circle cx="9.3" cy="24.3" r="1.1" fill="#222"/></svg><div style="left:369.5px;top:109.5px;font-family:'Liberation Serif',serif;font-style:italic;font-size:28px;line-height:1;color:#222;letter-spacing:-0.6px;">fx</div><svg style="left:397.0px;top:120.5px;" width="15" height="10" viewBox="0 0 15 10" ><polyline points="2,2 7.5,8 13,2" fill="none" stroke="#555" stroke-width="1.2"/></svg><svg style="left:16px;top:237px;" width="24" height="24" viewBox="0 0 24 24" ><path d="M4.6,13.4 L2.1,14.8 L11.8,20.4 L21.5,14.8 L19,13.4" fill="none" stroke="#333" stroke-width="1.35" stroke-linejoin="round"/><path d="M4.6,9.4 L2.1,10.8 L11.8,16.4 L21.5,10.8 L19,9.4" fill="none" stroke="#333" stroke-width="1.35" stroke-linejoin="round"/><path d="M11.8,3 L21.5,7.3 L11.8,12.3 L2.1,7.3 Z" fill="#fff" stroke="#333" stroke-width="1.35" stroke-linejoin="round"/></svg><svg style="left:15px;top:300px;" width="26" height="25" viewBox="0 0 26 25" ><path d="M13,1.5 V23.5 M2,12.5 H24" stroke="#555" stroke-width="1.4"/></svg><svg style="left:18px;top:364px;" width="18" height="21" viewBox="0 0 18 21" ><ellipse cx="9" cy="4.5" rx="7" ry="3" fill="none" stroke="#555" stroke-width="1.4"/><path d="M2,4.5 V16.5 Q2,19.5 9,19.5 Q16,19.5 16,16.5 V4.5" fill="none" stroke="#555" stroke-width="1.4"/></svg><svg style="left:16px;top:426px;" width="25" height="23" viewBox="0 0 25 23" ><path d="M10.5,14.2 H1.3 V2.8 H16.6 V7.5" fill="none" stroke="#555" stroke-width="1.4"/><path d="M4,5.6 V6.8 M4,8.9 V10.1 M4,12.2 V13.4 M14,5.6 V6.8" stroke="#666" stroke-width="1.3"/><path d="M13.6,18.5 V11 L22.1,9.2 V17.5" fill="none" stroke="#444" stroke-width="1.4"/><circle cx="11.6" cy="18.7" r="1.9" fill="#f3f2f1" stroke="#444" stroke-width="1.4"/><circle cx="20.1" cy="17.8" r="1.9" fill="#f3f2f1" stroke="#444" stroke-width="1.4"/></svg><svg style="left:19px;top:489px;" width="17" height="25" viewBox="0 0 17 25" ><circle cx="5.3" cy="4.1" r="2.7" fill="none" stroke="#555" stroke-width="1.3"/><path d="M3.6,6.5 V20.5 Q3.6,22.2 5.3,22.2 Q7,22.2 7,20.5 V6.5" fill="none" stroke="#555" stroke-width="1.3"/><rect x="10.6" y="2.2" width="3.6" height="3.6" fill="none" stroke="#555" stroke-width="1.3"/><path d="M12.4,5.8 V12.3 M9.1,12.3 H15.6" stroke="#555" stroke-width="1.3"/><path d="M10.5,12.5 V20.5 Q10.5,22.2 12.3,22.2 Q14,22.2 14,20.5 V12.5" fill="none" stroke="#555" stroke-width="1.3"/></svg>
</body></html>
